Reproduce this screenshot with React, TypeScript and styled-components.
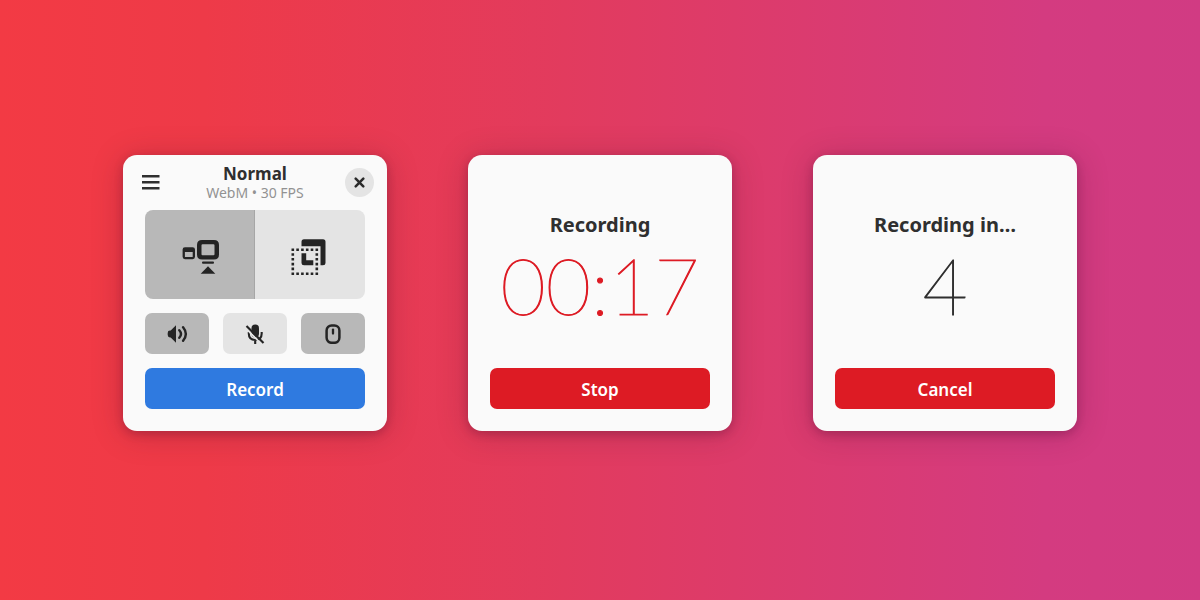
import React from 'react';
import styled, { createGlobalStyle } from 'styled-components';

const GlobalStyle = createGlobalStyle`
  * { box-sizing: border-box; }
  body { margin: 0; font-family: "Noto Sans", "Open Sans", sans-serif; color: #2f2f2f; }
  button { font: inherit; color: inherit; border: 0; padding: 0; cursor: pointer; }
  h2, p { margin: 0; }
  svg { display: block; }
`;

const Page = styled.main`
  min-height: 100vh;
  display: flex;
  flex-wrap: wrap;
  align-items: center;
  align-content: center;
  justify-content: center;
  gap: 81px;
  padding: 24px 24px 38px;
  background: linear-gradient(90deg, #f33a44 0%, #ee3a48 17%, #e23b5e 47%, #d43b80 87%, #d13b83 100%);
`;

const Card = styled.section`
  width: 264px;
  min-height: 276px;
  display: flex;
  flex-direction: column;
  border-radius: 14px;
  background: #fafafa;
  box-shadow: 0 3px 10px rgba(60, 10, 40, 0.24), 0 3px 32px rgba(60, 10, 40, 0.22);
`;

const Header = styled.header`
  height: 55px;
  display: flex;
  align-items: center;
  justify-content: space-between;
  padding: 0 13px;
`;

const HeaderButton = styled.button<{ $filled?: boolean }>`
  width: 29px;
  height: 29px;
  display: grid;
  place-items: center;
  border-radius: 50%;
  background: ${({ $filled }) => ($filled ? '#e4e4e4' : 'transparent')};
`;

const Headings = styled.div`
  padding-top: 2px;
  text-align: center;
`;

const Title = styled.h2`
  font-size: 17px;
  line-height: 19px;
  font-weight: 700;
`;

const Subtitle = styled.p`
  font-size: 14px;
  line-height: 20px;
  color: #929292;
`;

const Content = styled.div`
  flex: 1;
  display: flex;
  flex-direction: column;
  gap: 14px;
  padding: 0 22px 22px;
`;

const SourceSwitch = styled.div`
  height: 89px;
  display: grid;
  grid-template-columns: 1fr 1fr;
  border-radius: 8px;
  overflow: hidden;
`;

const Toggle = styled.button<{ $on?: boolean }>`
  display: grid;
  place-items: center;
  background: ${({ $on }) => ($on ? '#b8b8b8' : '#e4e4e4')};
`;

const SourceToggle = styled(Toggle)`
  padding-top: 4px;
  &:first-child { border-right: 1px solid #a6a6a6; }
`;

const OptionRow = styled.div`
  height: 41px;
  display: grid;
  grid-template-columns: repeat(3, 1fr);
  gap: 14px;
`;

const OptionToggle = styled(Toggle)`
  border-radius: 7px;
`;

const ActionButton = styled.button<{ $tone: 'blue' | 'red' }>`
  height: 41px;
  padding-top: 1px;
  border-radius: 7px;
  font-size: 17px;
  font-weight: 600;
  color: #fff;
  background: ${({ $tone }) => ($tone === 'blue' ? '#2f7ae0' : '#dd1b24')};
`;

const Status = styled.div`
  flex: 1;
  display: flex;
  flex-direction: column;
  align-items: center;
  padding-top: 56px;
`;

const StatusTitle = styled.h2`
  font-size: 20px;
  line-height: 28px;
  font-weight: 700;
`;

const Counter = styled.p<{ $live?: boolean }>`
  font-family: Lato, "Noto Sans", sans-serif;
  font-size: 78px;
  line-height: 92px;
  font-weight: 200;
  -webkit-text-stroke: 1px currentColor;
  color: ${({ $live }) => ($live ? '#dd1b24' : '#2f2f2f')};
`;

const MenuIcon = () => (
  <svg width="18" height="17" viewBox="0 0 18 17" fill="#2f2f2f">
    <rect y="1" width="17.500" height="2.500" />
    <rect y="7" width="17.500" height="2.500" />
    <rect y="13" width="17.500" height="2.500" />
  </svg>
);

const CloseIcon = () => (
  <svg width="11" height="11" viewBox="0 0 11 11" stroke="#2a2a2a" strokeWidth="2.500" strokeLinecap="round">
    <path d="M1.700 1.700 9.300 9.300M9.300 1.700 1.700 9.300" />
  </svg>
);

const DisplayIcon = () => (
  <svg width="40" height="36" viewBox="-2 0 40 36" fill="#242424">
    <path fillRule="evenodd" d="M3 8.200H10.600Q13 8.200 13 10.600V17.800Q13 20.200 10.600 20.200H3Q.6 20.200 .6 17.800V10.600Q.6 8.200 3 8.200ZM2.900 13V18H10.700V13Z" />
    <path fillRule="evenodd" d="M20 1H32Q37 1 37 6V15.500Q37 20.500 32 20.500H20Q15 20.500 15 15.500V6Q15 1 20 1ZM20.500 5.200Q19.500 5.200 19.500 6.200V15.200Q19.500 16.200 20.500 16.200H31.500Q32.500 16.200 32.500 15.200V6.200Q32.500 5.200 31.500 5.200Z" />
    <rect x="20" y="22.500" width="12" height="2.200" rx="1" />
    <path d="M26 27.300 33.300 34.700H18.700Z" />
  </svg>
);

const SelectionIcon = () => (
  <svg width="40" height="38" viewBox="0 0 40 38" fill="#242424">
    <path d="M11.500 8.200V3.700Q11.500 1.200 14 1.200H33Q35.500 1.200 35.500 3.700V25Q35.500 27.300 33 27.300H30.500V8.200Z" />
    <path d="M11.500 15.300H16.200V22.300H23.300V27.300H14Q11.500 27.300 11.500 25Z" />
    <g stroke="#242424" strokeWidth="2.600" strokeDasharray="2.600 2.200" fill="none">
      <path d="M1.500 11.700H28.100M1.500 35.700H28.100" />
      <path d="M2.800 15.200V33M26.800 15.200V33" />
    </g>
  </svg>
);

const SpeakerIcon = () => (
  <svg width="21" height="20" viewBox="0 0 21 20" fill="#242424">
    <path d="M3 6.600H3.700L9 1.300V18.700L3.700 13.400H3Q.7 13.400 .7 11V9Q.7 6.600 3 6.600Z" />
    <path d="M12.300 6.200Q15.700 10 12.300 13.800M16.100 3.300Q21.600 10 16.100 16.700" fill="none" stroke="#242424" strokeWidth="2.400" strokeLinecap="round" />
  </svg>
);

const MicOffIcon = () => (
  <svg width="20" height="20" viewBox="0 0 20 20" fill="none" stroke="#242424">
    <rect x="6.500" y="0.500" width="7.500" height="13" rx="3.700" fill="#242424" stroke="none" />
    <path d="M3.800 8V9.500Q3.800 15.800 10.200 16Q16.600 15.800 16.700 9.500V8M10.200 16V20" strokeWidth="2.100" />
    <path d="M0 3.500 17 20.500" stroke="#e4e4e4" strokeWidth="1.600" />
    <path d="M1.500 2 18.500 19" strokeWidth="2.100" />
  </svg>
);

const MouseIcon = () => (
  <svg width="16" height="20" viewBox="0 0 16 20" fill="none" stroke="#242424">
    <rect x="1.600" y="1.400" width="12.800" height="17.400" rx="5" strokeWidth="2.500" />
    <path d="M8 5.600V9.600" strokeWidth="2.300" strokeLinecap="round" />
  </svg>
);

export default function App() {
  return (
    <>
      <GlobalStyle />
      <Page>
        <Card>
          <Header>
            <HeaderButton aria-label="Main menu"><MenuIcon /></HeaderButton>
            <Headings>
              <Title>Normal</Title>
              <Subtitle>WebM • 30 FPS</Subtitle>
            </Headings>
            <HeaderButton $filled aria-label="Close"><CloseIcon /></HeaderButton>
          </Header>
          <Content>
            <SourceSwitch>
              <SourceToggle $on aria-pressed="true" aria-label="Capture a monitor or window"><DisplayIcon /></SourceToggle>
              <SourceToggle aria-pressed="false" aria-label="Capture a selection"><SelectionIcon /></SourceToggle>
            </SourceSwitch>
            <OptionRow>
              <OptionToggle $on aria-pressed="true" aria-label="Desktop audio"><SpeakerIcon /></OptionToggle>
              <OptionToggle aria-pressed="false" aria-label="Microphone"><MicOffIcon /></OptionToggle>
              <OptionToggle $on aria-pressed="true" aria-label="Show pointer"><MouseIcon /></OptionToggle>
            </OptionRow>
            <ActionButton $tone="blue">Record</ActionButton>
          </Content>
        </Card>
        <Card>
          <Content>
            <Status>
              <StatusTitle>Recording</StatusTitle>
              <Counter $live>00:17</Counter>
            </Status>
            <ActionButton $tone="red">Stop</ActionButton>
          </Content>
        </Card>
        <Card>
          <Content>
            <Status>
              <StatusTitle>Recording in…</StatusTitle>
              <Counter>4</Counter>
            </Status>
            <ActionButton $tone="red">Cancel</ActionButton>
          </Content>
        </Card>
      </Page>
    </>
  );
}
